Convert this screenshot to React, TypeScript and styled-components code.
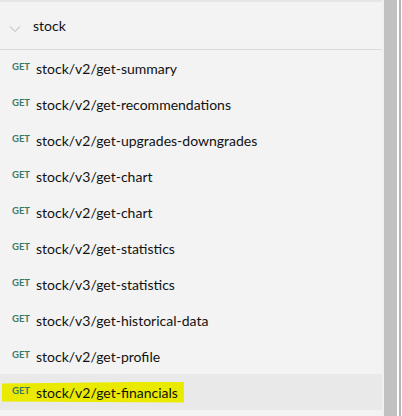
import React from 'react';
import styled, { createGlobalStyle } from 'styled-components';

const GlobalStyle = createGlobalStyle`
  html, body {
    margin: 0;
    padding: 0;
    background: #ffffff;
    font-family: Lato, "Open Sans", Arial, sans-serif;
  }
`;

const Frame = styled.div`
  display: flex;
  width: 402px;
  height: 416px;
  overflow: hidden;
  background: #ffffff;
`;

const Panel = styled.div`
  width: 382px;
  background: #f3f3f3;
  border-top: 2px solid #e6e6e6;
  display: flex;
  flex-direction: column;
`;

const Gutter = styled.div`
  width: 2px;
  background: #f0f0f0;
`;

const Scrollbar = styled.div`
  width: 13px;
  background: #c1c1c1;
`;

const Edge = styled.div`
  width: 5px;
  display: flex;
  background: #ffffff;
  &::after {
    content: '';
    width: 2px;
    margin-left: 2px;
    background: #b4b4b4;
  }
`;

const GroupHeader = styled.div`
  height: 47px;
  display: flex;
  align-items: center;
  padding-left: 9px;
  gap: 12px;
  border-bottom: 1px solid #dcdcdc;
  font-size: 14px;
  color: #111;
`;

const Chevron = styled.svg`
  width: 12px;
  height: 8px;
  margin-top: 6px;
`;

const List = styled.div`
  display: flex;
  flex-direction: column;
`;

const Row = styled.div<{ $active?: boolean }>`
  height: 36px;
  display: flex;
  align-items: center;
  padding-left: 12px;
  background: ${(p) => (p.$active ? '#e9e9e9' : 'transparent')};
`;

const Marker = styled.span<{ $on?: boolean }>`
  display: flex;
  align-items: center;
  height: 21px;
  margin-left: -10px;
  padding: 0 6px 0 10px;
  background: ${(p) => (p.$on ? '#eaea00' : 'transparent')};
  clip-path: ${(p) => (p.$on ? 'polygon(0 10%, 100% 0, 100% 100%, 0 95%)' : 'none')};
`;

const Method = styled.span`
  font-size: 9.5px;
  font-weight: 700;
  color: #3a7b66;
  width: 24px;
  margin-top: -4px;
`;

const Path = styled.span`
  font-size: 14px;
  color: #111;
`;

const endpoints = [
  'stock/v2/get-summary',
  'stock/v2/get-recommendations',
  'stock/v2/get-upgrades-downgrades',
  'stock/v3/get-chart',
  'stock/v2/get-chart',
  'stock/v2/get-statistics',
  'stock/v3/get-statistics',
  'stock/v3/get-historical-data',
  'stock/v2/get-profile',
  'stock/v2/get-financials',
];

const App: React.FC = () => {
  return (
    <>
      <GlobalStyle />
      <Frame>
        <Panel>
          <GroupHeader>
            <Chevron viewBox="0 0 12 8">
              <path d="M1 1.5L6 6.5L11 1.5" fill="none" stroke="#b5b5b5" strokeWidth="1" />
            </Chevron>
            <span>stock</span>
          </GroupHeader>
          <List>
            {endpoints.map((e, i) => {
              const last = i === endpoints.length - 1;
              return (
                <Row key={i} $active={last}>
                  <Marker $on={last}>
                    <Method>GET</Method>
                    <Path>{e}</Path>
                  </Marker>
                </Row>
              );
            })}
          </List>
        </Panel>
        <Gutter />
        <Scrollbar />
        <Edge />
      </Frame>
    </>
  );
};

export default App;
